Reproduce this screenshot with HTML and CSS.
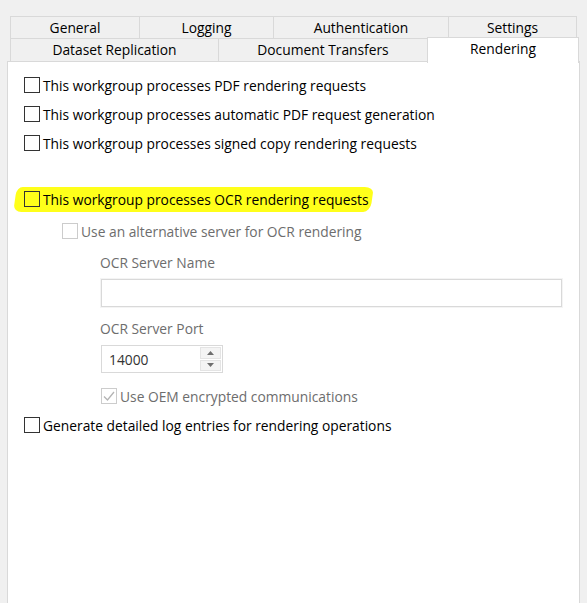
FILE: index.html
```html
<!DOCTYPE html>
<html>
<head>
<meta charset="utf-8">
<link rel="stylesheet" href="styles.css">
</head>
<body>
<div class="tabs">
  <div class="tab-row row1">
    <div class="tab w-general">General</div>
    <div class="tab w-logging">Logging</div>
    <div class="tab w-auth">Authentication</div>
    <div class="tab w-settings last">Settings</div>
  </div>
  <div class="tab-row row2">
    <div class="tab w-dataset">Dataset Replication</div>
    <div class="tab w-doc">Document Transfers</div>
    <div class="tab selected">Rendering</div>
  </div>
</div>
<div class="panel">
  <div class="content">
    <div class="cb-row"><span class="box"></span><span>This workgroup processes PDF rendering requests</span></div>
    <div class="cb-row"><span class="box"></span><span>This workgroup processes automatic PDF request generation</span></div>
    <div class="cb-row"><span class="box"></span><span>This workgroup processes signed copy rendering requests</span></div>
    <div class="cb-row ocr"><span class="hl"><span class="box"></span><span>This workgroup processes OCR rendering requests</span></span></div>
    <div class="group">
      <div class="cb-row disabled"><span class="box"></span><span>Use an alternative server for OCR rendering</span></div>
      <div class="fields">
        <div class="label">OCR Server Name</div>
        <div class="input"></div>
        <div class="label port-label">OCR Server Port</div>
        <div class="spin">
          <span class="spin-value">14000</span>
          <span class="spin-btns">
            <span class="spin-btn"><svg width="7" height="4" viewBox="0 0 7 4"><polygon points="0,4 7,4 3.5,0" fill="#6e6e6e"/></svg></span>
            <span class="spin-btn"><svg width="7" height="4" viewBox="0 0 7 4"><polygon points="0,0 7,0 3.5,4" fill="#6e6e6e"/></svg></span>
          </span>
        </div>
        <div class="cb-row disabled oem"><span class="box"><svg width="14" height="14" viewBox="0 0 14 14"><polyline points="2,7.5 5.5,11 12,3" fill="none" stroke="#b4b4b4" stroke-width="1.3"/></svg></span><span>Use OEM encrypted communications</span></div>
      </div>
    </div>
    <div class="cb-row"><span class="box"></span><span>Generate detailed log entries for rendering operations</span></div>
  </div>
</div>
</body>
</html>
```

FILE: styles.css
```css
html, body {
  margin: 0;
  padding: 0;
  background: #f0f0f0;
  font-family: "Open Sans", "Noto Sans", sans-serif;
  font-size: 13.8px;
  color: #000;
  height: 603px;
  overflow: hidden;
}

.tabs {
  padding: 16px 0 0 10px;
  position: relative;
  z-index: 2;
}

.tab-row {
  display: flex;
}

.tab {
  box-sizing: border-box;
  border-top: 1px solid #d9d9d9;
  border-left: 1px solid #d9d9d9;
  background: #f0f0f0;
  text-align: center;
  line-height: 22px;
  height: 22px;
  white-space: nowrap;
}

.tab.last {
  border-right: 1px solid #d9d9d9;
}

.w-general { width: 129px; }
.w-logging { width: 134px; }
.w-auth { width: 175px; }
.w-settings { width: 129px; }

.row2 .tab {
  height: 23px;
  line-height: 21px;
}

.w-dataset { width: 208px; }
.w-doc { width: 209px; }

.tab.selected {
  width: 152px;
  height: 26px;
  margin-top: -1px;
  margin-bottom: -2px;
  background: #fff;
  border-right: 1px solid #d9d9d9;
  line-height: 22px;
}

.panel {
  margin-left: 7px;
  width: 573px;
  height: 560px;
  box-sizing: border-box;
  background: #fff;
  border: 1px solid #d9d9d9;
  position: relative;
  z-index: 1;
}

.content {
  padding: 9px 0 0 16px;
}

.cb-row {
  display: flex;
  align-items: center;
  height: 28px;
  margin-bottom: 1px;
  white-space: nowrap;
}

.box {
  box-sizing: border-box;
  width: 16px;
  height: 16px;
  border: 1px solid #333;
  background: #fff;
  margin-right: 3px;
  flex: none;
  display: flex;
  align-items: center;
  justify-content: center;
}

.cb-row.ocr {
  margin-top: 28px;
  margin-bottom: 4px;
}

.hl {
  position: relative;
  z-index: 0;
  display: flex;
  align-items: center;
}

.hl::before {
  content: "";
  position: absolute;
  left: -9px;
  right: -3px;
  top: -3px;
  bottom: -3px;
  background: #ffff1a;
  border-radius: 6px 9px 7px 8px / 8px 6px 9px 7px;
  transform: skewX(-8deg);
  z-index: -1;
}

.hl .box {
  background: transparent;
  border-color: #333;
}

.group {
  padding-left: 38px;
}

.disabled {
  color: #6d6d6d;
}

.disabled .box {
  border-color: #cccccc;
}

.fields {
  padding-left: 39px;
}

.label {
  color: #6d6d6d;
  height: 22px;
  line-height: 22px;
  margin-top: 7px;
  margin-left: -1px;
}

.input {
  box-sizing: border-box;
  width: 461px;
  height: 28px;
  margin-top: 5px;
  border: 1px solid #d9d9d9;
  outline: 1px solid #f4f4f4;
  background: #fff;
}

.port-label {
  margin-top: 11px;
}

.spin {
  box-sizing: border-box;
  width: 122px;
  height: 28px;
  margin-top: 5px;
  border: 1px solid #d9d9d9;
  display: flex;
  align-items: center;
  justify-content: space-between;
  padding: 1px 1px 1px 7px;
}

.spin-value {
  color: #333;
}

.spin-btns {
  display: flex;
  flex-direction: column;
  width: 21px;
  height: 24px;
  gap: 1px;
}

.spin-btn {
  flex: 1;
  border: 1px solid #e4e4e4;
  background: #f4f4f4;
  display: flex;
  align-items: center;
  justify-content: center;
}

.cb-row.oem {
  margin-top: 9px;
}
```
